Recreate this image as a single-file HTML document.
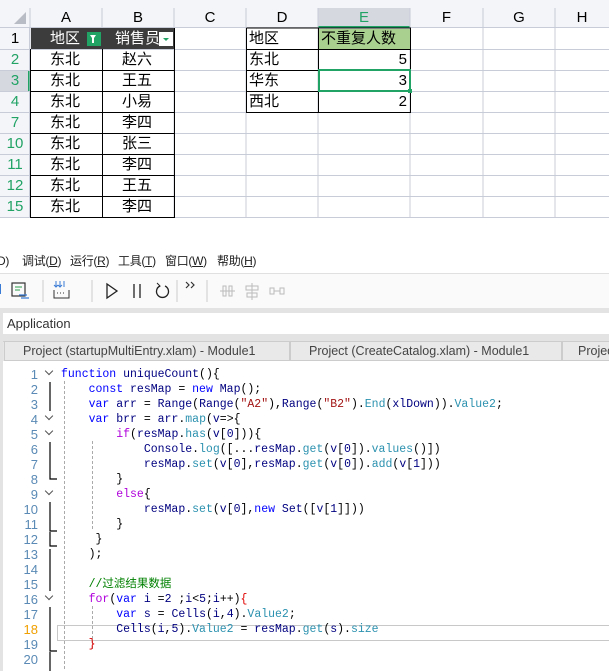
<!DOCTYPE html>
<html><head><meta charset="utf-8"><style>
*{margin:0;padding:0;box-sizing:border-box}
body{width:609px;height:671px;overflow:hidden;background:#fff;position:relative;font-family:"Liberation Sans","Noto Sans CJK SC",sans-serif}
.a{position:absolute}
.cell{position:absolute;font-size:14px;line-height:21px;white-space:nowrap}
.code{position:absolute;left:61px;font-family:"Liberation Mono","Noto Sans CJK SC",monospace;font-size:11.5px;line-height:15px;white-space:pre;color:#000080}
.ln{position:absolute;width:38px;text-align:right;font-family:"Liberation Sans",sans-serif;font-size:13px;line-height:15px;color:#5a8ab5}
.k{color:#0000ff}.m{color:#2b91af}.p{color:#af00db}.s{color:#a31515}.c{color:#008000}.r{color:#e00000}.d{color:#000}
.fold{position:absolute;left:46px;width:6px;height:6px;border-right:1.2px solid #555;border-bottom:1.2px solid #555;transform:rotate(45deg)}
.mn{position:absolute;top:252px;font-size:12px;line-height:18px;white-space:nowrap;color:#222;letter-spacing:-0.3px}
</style></head><body>
<!-- spreadsheet -->
<div class="a" style="left:0;top:0;width:609px;height:8px;background:#f4f5f8"></div>
<div class="a" style="left:0;top:8px;width:609px;height:20px;background:#f4f5f8;border-bottom:1px solid #c8ccd8"></div>
<div class="a" style="left:318px;top:8px;width:92px;height:20px;background:#d6d8df;border-bottom:2px solid #21a366"></div>
<div class="a" style="left:0;top:28px;width:30px;height:190px;background:#f4f5f8;border-right:1px solid #c8ccd8"></div>
<div class="a" style="left:0;top:70px;width:30px;height:21px;background:#d6d8df;border-right:2px solid #21a366"></div>
<svg class="a" style="left:14px;top:12px" width="12" height="12"><path d="M12 0V12H0Z" fill="#b8bcc4"/></svg>
<div class="cell" style="left:30px;top:8px;width:72px;text-align:center;line-height:20px;font-size:15px">A</div>
<div class="cell" style="left:102px;top:8px;width:72px;text-align:center;line-height:20px;font-size:15px">B</div>
<div class="cell" style="left:174px;top:8px;width:72px;text-align:center;line-height:20px;font-size:15px">C</div>
<div class="cell" style="left:246px;top:8px;width:72px;text-align:center;line-height:20px;font-size:15px">D</div>
<div class="cell" style="left:318px;top:8px;width:92px;text-align:center;line-height:20px;font-size:15px;color:#21a366">E</div>
<div class="cell" style="left:410px;top:8px;width:73px;text-align:center;line-height:20px;font-size:15px">F</div>
<div class="cell" style="left:483px;top:8px;width:72px;text-align:center;line-height:20px;font-size:15px">G</div>
<div class="cell" style="left:555px;top:8px;width:54px;text-align:center;line-height:20px;font-size:15px">H</div>
<svg class="a" style="left:0;top:0" width="609" height="220">
<g stroke="#c8ccd8" stroke-width="1">
<path d="M30 8V218M102 8V28M174 8V218M246 8V218M318 8V218M410 8V218M483 8V218M555 8V218"/>
<path d="M0 49.5H609M0 70.5H609M0 91.5H609M0 112.5H609M0 133.5H609M0 154.5H609M0 175.5H609M0 196.5H609M0 217.5H609"/>
</g>
<rect x="31" y="28" width="143" height="21" fill="#3c3c3c"/>
<g stroke="#000" stroke-width="1" fill="none">
<path d="M30.5 49V217.5H174.5V28M102.5 49V217.5M30 70.5H174M30 91.5H174M30 112.5H174M30 133.5H174M30 154.5H174M30 175.5H174M30 196.5H174"/>
<path d="M246.5 28V112.5H410.5V28H246.5M318.5 28V112.5M246 49.5H410M246 70.5H410M246 91.5H410"/>
</g>
<rect x="319" y="29" width="91" height="20" fill="#a9d08e"/>
<rect x="87" y="32" width="14" height="14" fill="#21a366"/>
<path d="M90 35h6l-2 3v5h-2v-5z" fill="#fff"/>
<rect x="159" y="32" width="14" height="14" fill="#fff"/>
<path d="M163 38h6l-3 3z" fill="#21a366"/>
<rect x="319" y="70" width="91" height="21" fill="none" stroke="#21a366" stroke-width="2"/>
<rect x="408" y="89" width="4" height="4" fill="#21a366"/>
</svg>
<div class="cell" style="left:0;top:28px;width:30px;text-align:center;font-size:15px">1</div>
<div class="cell" style="left:0;top:49px;width:30px;text-align:center;font-size:15px;color:#21a366">2</div>
<div class="cell" style="left:0;top:70px;width:30px;text-align:center;font-size:15px;color:#21a366">3</div>
<div class="cell" style="left:0;top:91px;width:30px;text-align:center;font-size:15px;color:#21a366">4</div>
<div class="cell" style="left:0;top:112px;width:30px;text-align:center;font-size:15px;color:#21a366">7</div>
<div class="cell" style="left:0;top:133px;width:30px;text-align:center;font-size:15px;color:#21a366">10</div>
<div class="cell" style="left:0;top:154px;width:30px;text-align:center;font-size:15px;color:#21a366">11</div>
<div class="cell" style="left:0;top:175px;width:30px;text-align:center;font-size:15px;color:#21a366">12</div>
<div class="cell" style="left:0;top:196px;width:30px;text-align:center;font-size:15px;color:#21a366">15</div>
<div class="cell" style="left:50px;top:28px;color:#fff;font-size:15px">地区</div>
<div class="cell" style="left:115px;top:28px;color:#fff;font-size:15px">销售员</div>
<div class="cell" style="left:50px;top:49px;font-size:15px">东北<br>东北<br>东北<br>东北<br>东北<br>东北<br>东北<br>东北</div>
<div class="cell" style="left:122px;top:49px;font-size:15px">赵六<br>王五<br>小易<br>李四<br>张三<br>李四<br>王五<br>李四</div>
<div class="cell" style="left:249px;top:28px;font-size:15px">地区<br>东北<br>华东<br>西北</div>
<div class="cell" style="left:321px;top:28px;font-size:15px">不重复人数</div>
<div class="cell" style="left:318px;top:49px;width:89px;text-align:right;font-size:15px">5<br>3<br>2</div>
<!-- menu -->
<div class="mn" style="left:-3px">D)</div>
<div class="mn" style="left:22px">调试(<u>D</u>)</div>
<div class="mn" style="left:70px">运行(<u>R</u>)</div>
<div class="mn" style="left:118px">工具(<u>T</u>)</div>
<div class="mn" style="left:165px">窗口(<u>W</u>)</div>
<div class="mn" style="left:217px">帮助(<u>H</u>)</div>
<div class="a" style="left:0;top:273px;width:609px;height:35px;background:#fafafa;border-top:1px solid #e0e0e0"></div>
<svg class="a" style="left:0;top:274px" width="300" height="34">
<g stroke="#ccc"><path d="M43 6V28M92 6V28M177 6V28"/></g>
<rect x="-4" y="10" width="5" height="10" fill="#3a7bd5"/>
<rect x="12" y="9" width="13" height="13" fill="none" stroke="#333" stroke-width="1.2"/>
<path d="M15 13h7M15 16h5" stroke="#2a9a4a"/><path d="M19 21h8M21 24h8" stroke="#3a7bd5" stroke-width="1.2"/>
<path d="M56 7v6M60 7v6M64 7v6M54 11l2 2 2-2M58 11l2 2 2-2" stroke="#3a7bd5" fill="none"/>
<path d="M54 16v8h15v-8" stroke="#333" fill="none"/><path d="M57 19h9" stroke="#333" stroke-dasharray="1 2"/>
<path d="M107 10v14l10-7z" fill="none" stroke="#222" stroke-width="1.3"/>
<path d="M134 10v14M140 10v14" stroke="#222" stroke-width="1.3"/>
<path d="M160 12a6 6 0 1 0 5 0" fill="none" stroke="#222" stroke-width="1.3"/><path d="M157 9l3 3-3 2" fill="none" stroke="#222"/>
<path d="M186 8l3 3-3 3M191 8l3 3-3 3" fill="none" stroke="#333" stroke-width="1.2"/>
<path d="M207 6V28" stroke="#ccc"/>
<g stroke="#bbb" fill="none"><path d="M220 17h15M223 12h3v10h-3zM229 12h3v10h-3z"/><path d="M252 9v17M246 12h12v4h-12zM247 19h10v4h-10z"/><path d="M270 14h4v6h-4zM280 14h4v6h-4zM274 17h6"/></g>
</svg>
<!-- app bar -->
<div class="a" style="left:0;top:308px;width:609px;height:53px;background:#e3e3e3"></div>
<div class="a" style="left:3px;top:313px;width:606px;height:21px;background:#fff;font-size:13px;line-height:21px;padding-left:4px;color:#333">Application</div>
<div class="a" style="left:3px;top:341px;width:606px;height:20px;background:#e6e6e6;border-top:1px solid #d0d0d0"></div>
<div class="a" style="left:4px;top:341px;width:286px;height:20px;border:1px solid #ccc;font-size:12.5px;line-height:18px;padding-left:18px;color:#444;white-space:nowrap;background:#e9e9e9">Project (startupMultiEntry.xlam) - Module1</div>
<div class="a" style="left:290px;top:341px;width:272px;height:20px;border:1px solid #ccc;font-size:12.5px;line-height:18px;padding-left:18px;color:#444;white-space:nowrap;background:#e9e9e9">Project (CreateCatalog.xlam) - Module1</div>
<div class="a" style="left:562px;top:341px;width:60px;height:20px;border:1px solid #ccc;font-size:12.5px;line-height:18px;padding-left:15px;color:#444;white-space:nowrap;background:#e9e9e9;overflow:hidden">Project</div>
<div class="a" style="left:0;top:361px;width:3px;height:310px;background:#e3e3e3"></div>
<!-- code -->
<div class="a" style="left:57px;top:625px;width:560px;height:16px;border:1px solid #c8c8c8"></div>
<svg class="a" style="left:0;top:361px" width="120" height="310">
<g stroke="#000" fill="none" stroke-width="1.2"><path d="M50 21V50M50 81V118H57M50 141V170H57M50 171V185H57M50 188V230M50 246V290H57M50 291V310"/></g>
<g stroke="#aaa" stroke-dasharray="3 2" fill="none"><path d="M64.5 20V310M92.5 80V170M92.5 245V290"/></g>
</svg>
<div class="fold" style="top:368px"></div><div class="fold" style="top:413px"></div><div class="fold" style="top:428px"></div><div class="fold" style="top:488px"></div><div class="fold" style="top:593px"></div>
<div class="ln" style="left:0;top:367px">1<br>2<br>3<br>4<br>5<br>6<br>7<br>8<br>9<br>10<br>11<br>12<br>13<br>14<br>15<br>16<br>17<br><span style="color:#f0a000">18</span><br>19<br>20</div>
<div class="code" style="top:367px"><span class="k">function</span> uniqueCount<span class="d">(){</span>
    <span class="k">const</span> resMap <span class="d">=</span> <span class="k">new</span> Map<span class="d">();</span>
    <span class="k">var</span> arr <span class="d">=</span> Range<span class="d">(</span>Range<span class="d">(</span><span class="s">"A2"</span><span class="d">),</span>Range<span class="d">(</span><span class="s">"B2"</span><span class="d">).</span><span class="m">End</span><span class="d">(</span>xlDown<span class="d">)).</span><span class="m">Value2</span><span class="d">;</span>
    <span class="k">var</span> brr <span class="d">=</span> arr<span class="d">.</span><span class="m">map</span><span class="d">(</span>v<span class="d">=&gt;{</span>
        <span class="p">if</span><span class="d">(</span>resMap<span class="d">.</span><span class="m">has</span><span class="d">(</span>v<span class="d">[</span>0<span class="d">])){</span>
            Console<span class="d">.</span><span class="m">log</span><span class="d">([...</span>resMap<span class="d">.</span><span class="m">get</span><span class="d">(</span>v<span class="d">[</span>0<span class="d">]).</span><span class="m">values</span><span class="d">()])</span>
            resMap<span class="d">.</span><span class="m">set</span><span class="d">(</span>v<span class="d">[</span>0<span class="d">],</span>resMap<span class="d">.</span><span class="m">get</span><span class="d">(</span>v<span class="d">[</span>0<span class="d">]).</span><span class="m">add</span><span class="d">(</span>v<span class="d">[</span>1<span class="d">]))</span>
        <span class="d">}</span>
        <span class="p">else</span><span class="d">{</span>
            resMap<span class="d">.</span><span class="m">set</span><span class="d">(</span>v<span class="d">[</span>0<span class="d">],</span><span class="k">new</span> Set<span class="d">([</span>v<span class="d">[</span>1<span class="d">]]))</span>
        <span class="d">}</span>
     <span class="d">}</span>
    <span class="d">);</span>

    <span class="c">//过滤结果数据</span>
    <span class="p">for</span><span class="d">(</span><span class="k">var</span> i <span class="d">=</span>2 <span class="d">;</span>i<span class="d">&lt;</span>5<span class="d">;</span>i<span class="d">++)</span><span class="r">{</span>
        <span class="k">var</span> s <span class="d">=</span> Cells<span class="d">(</span>i<span class="d">,</span>4<span class="d">).</span><span class="m">Value2</span><span class="d">;</span>
        Cells<span class="d">(</span>i<span class="d">,</span>5<span class="d">).</span><span class="m">Value2</span> <span class="d">=</span> resMap<span class="d">.</span><span class="m">get</span><span class="d">(</span>s<span class="d">).</span><span class="m">size</span>
    <span class="r">}</span>
</div>
</body></html>
